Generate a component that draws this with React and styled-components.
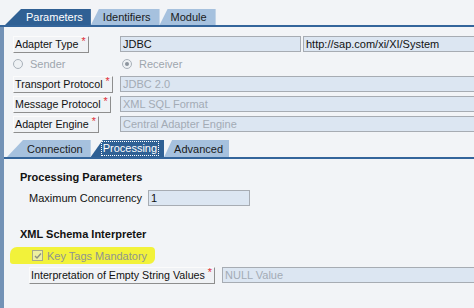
import React from 'react';
import styled, { createGlobalStyle } from 'styled-components';

const GlobalStyle = createGlobalStyle`
    body {
        margin: 0;
        background: #f2f4f7;
    }
`

const Page = styled.div`
    width: 474px;
    height: 308px;
    overflow: hidden;
    background-color: #f2f4f7;
    font-family: Arial, "Liberation Sans", sans-serif;
    font-size: 11px;
    color: #111111;
`

const TabStrip = styled.div`
    display: flex;
    align-items: flex-end;
    padding-left: ${props => props.$inset}px;
    padding-top: ${props => props.$top}px;
    border-bottom: 2px solid #34659b;
`

const Tab = styled.div`
    height: ${props => props.$h}px;
    display: flex;
    align-items: center;
    padding-left: ${props => props.$pl}px;
    padding-right: ${props => props.$pr}px;
    background-color: ${props => (props.$active ? '#2f6094' : '#a6c1de')};
    color: ${props => (props.$active ? '#ffffff' : '#1b1b1b')};
    clip-path: polygon(${props => props.$slant}px 0, 100% 0, 100% 100%, 0 100%);
    white-space: nowrap;
`

const FocusText = styled.span`
    outline: 1px dotted #ffffff;
    outline-offset: 0;
    padding: 0 1px;
    line-height: 13px;
`

const Body = styled.div`
    border-left: 4px solid #7392b6;
    height: 100%;
`

const Form = styled.div`
    display: flex;
    flex-direction: column;
    gap: 4px;
    padding: 9px 0 8px 9px;
`

const Row = styled.div`
    display: flex;
    align-items: center;
    height: 16px;
`

const LabelCell = styled.div`
    width: ${props => props.$w}px;
    flex-shrink: 0;
    display: flex;
    align-items: center;
`

const LabelButton = styled.div`
    height: 15px;
    display: flex;
    align-items: center;
    padding: 0 2px 0 1px;
    background-color: #f0f2f5;
    border-top: 1px solid #fbfbfb;
    border-left: 1px solid #fbfbfb;
    border-right: 1px solid #8e8e8e;
    border-bottom: 1px solid #8e8e8e;
    white-space: nowrap;
    font-size: 10.7px;
`

const Required = styled.span`
    color: #e2323c;
    margin-left: 3px;
    position: relative;
    top: -3px;
`

const Field = styled.div`
    height: 14px;
    width: ${props => (props.$w ? `${props.$w}px` : 'auto')};
    flex: ${props => (props.$w ? '0 0 auto' : '1 1 auto')};
    display: flex;
    align-items: center;
    padding-left: 2px;
    margin-right: ${props => props.$mr || 0}px;
    background-color: #dce6f2;
    border: 1px solid #a7acb3;
    border-right: ${props => (props.$open ? 'none' : '1px solid #a7acb3')};
    color: ${props => (props.$disabled ? '#a3abb5' : '#111111')};
    white-space: nowrap;
    overflow: hidden;
`

const Radio = styled.span`
    width: 8px;
    height: 8px;
    border-radius: 50%;
    border: 1px solid #a9b1ba;
    background-color: #eef1f4;
    display: inline-flex;
    align-items: center;
    justify-content: center;
    margin-right: 7px;

    &::after {
        content: '';
        width: 4px;
        height: 4px;
        border-radius: 50%;
        background-color: ${props => (props.$checked ? '#8c949d' : 'transparent')};
    }
`

const RadioOption = styled.div`
    display: flex;
    align-items: center;
    color: #9ea6ae;
    width: ${props => props.$w}px;
`

const Panel = styled.div`
    padding: 11px 0 0 16px;
    display: flex;
    flex-direction: column;
`

const SectionTitle = styled.div`
    font-weight: bold;
    line-height: 14px;
    color: #111111;
    margin-top: ${props => props.$mt}px;
`

const IndentRow = styled(Row)`
    padding-left: 9px;
    margin-top: ${props => props.$mt}px;
`

const Highlight = styled.div`
    display: flex;
    align-items: center;
    height: 17px;
    margin-left: -10px;
    margin-top: 6px;
    padding-left: 22px;
    width: 123px;
    background-color: #f2f23a;
    border-radius: 7px 4px 6px 3px;
    color: #8f9590;
`

const CheckBox = styled.span`
    width: 9px;
    height: 9px;
    border: 1px solid #a7a98a;
    background-color: #eef0a0;
    display: inline-flex;
    align-items: center;
    justify-content: center;
    margin-right: 4px;
`

function App() {
    return (
        <Page>
            <GlobalStyle />
            <TabStrip $inset={5} $top={9}>
                <Tab $h={16} $pl={21} $pr={8} $slant={16} $active>Parameters</Tab>
                <Tab $h={16} $pl={12} $pr={9} $slant={8}>Identifiers</Tab>
                <Tab $h={16} $pl={11} $pr={9} $slant={8}>Module</Tab>
            </TabStrip>
            <Body>
                <Form>
                    <Row>
                        <LabelCell $w={107}>
                            <LabelButton>Adapter Type<Required>*</Required></LabelButton>
                        </LabelCell>
                        <Field $w={177} $mr={2}>JDBC</Field>
                        <Field $open>http://sap.com/xi/XI/System</Field>
                    </Row>
                    <Row>
                        <RadioOption $w={109}><Radio />Sender</RadioOption>
                        <RadioOption $w={80}><Radio $checked />Receiver</RadioOption>
                    </Row>
                    <Row>
                        <LabelCell $w={107}>
                            <LabelButton>Transport Protocol<Required>*</Required></LabelButton>
                        </LabelCell>
                        <Field $open $disabled>JDBC 2.0</Field>
                    </Row>
                    <Row>
                        <LabelCell $w={107}>
                            <LabelButton>Message Protocol<Required>*</Required></LabelButton>
                        </LabelCell>
                        <Field $open $disabled>XML SQL Format</Field>
                    </Row>
                    <Row>
                        <LabelCell $w={107}>
                            <LabelButton>Adapter Engine<Required>*</Required></LabelButton>
                        </LabelCell>
                        <Field $open $disabled>Central Adapter Engine</Field>
                    </Row>
                </Form>
                <TabStrip $inset={3} $top={0}>
                    <Tab $h={17} $pl={20} $pr={8} $slant={16}>Connection</Tab>
                    <Tab $h={17} $pl={11} $pr={6} $slant={12} $active>
                        <FocusText>Processing</FocusText>
                    </Tab>
                    <Tab $h={17} $pl={10} $pr={6} $slant={8}>Advanced</Tab>
                </TabStrip>
                <Panel>
                    <SectionTitle $mt={0}>Processing Parameters</SectionTitle>
                    <IndentRow $mt={6}>
                        <LabelCell $w={119}>Maximum Concurrency</LabelCell>
                        <Field $w={98}>1</Field>
                    </IndentRow>
                    <SectionTitle $mt={21}>XML Schema Interpreter</SectionTitle>
                    <Highlight>
                        <CheckBox>
                            <svg width="8" height="8" viewBox="0 0 8 8">
                                <path d="M1 4 L3 6 L7 1.5" fill="none" stroke="#8d9180" strokeWidth="1.4" />
                            </svg>
                        </CheckBox>
                        Key Tags Mandatory
                    </Highlight>
                    <IndentRow $mt={3}>
                        <LabelCell $w={193}>
                            <LabelButton>Interpretation of Empty String Values<Required>*</Required></LabelButton>
                        </LabelCell>
                        <Field $open $disabled>NULL Value</Field>
                    </IndentRow>
                </Panel>
            </Body>
        </Page>
    );
}

export default App;
